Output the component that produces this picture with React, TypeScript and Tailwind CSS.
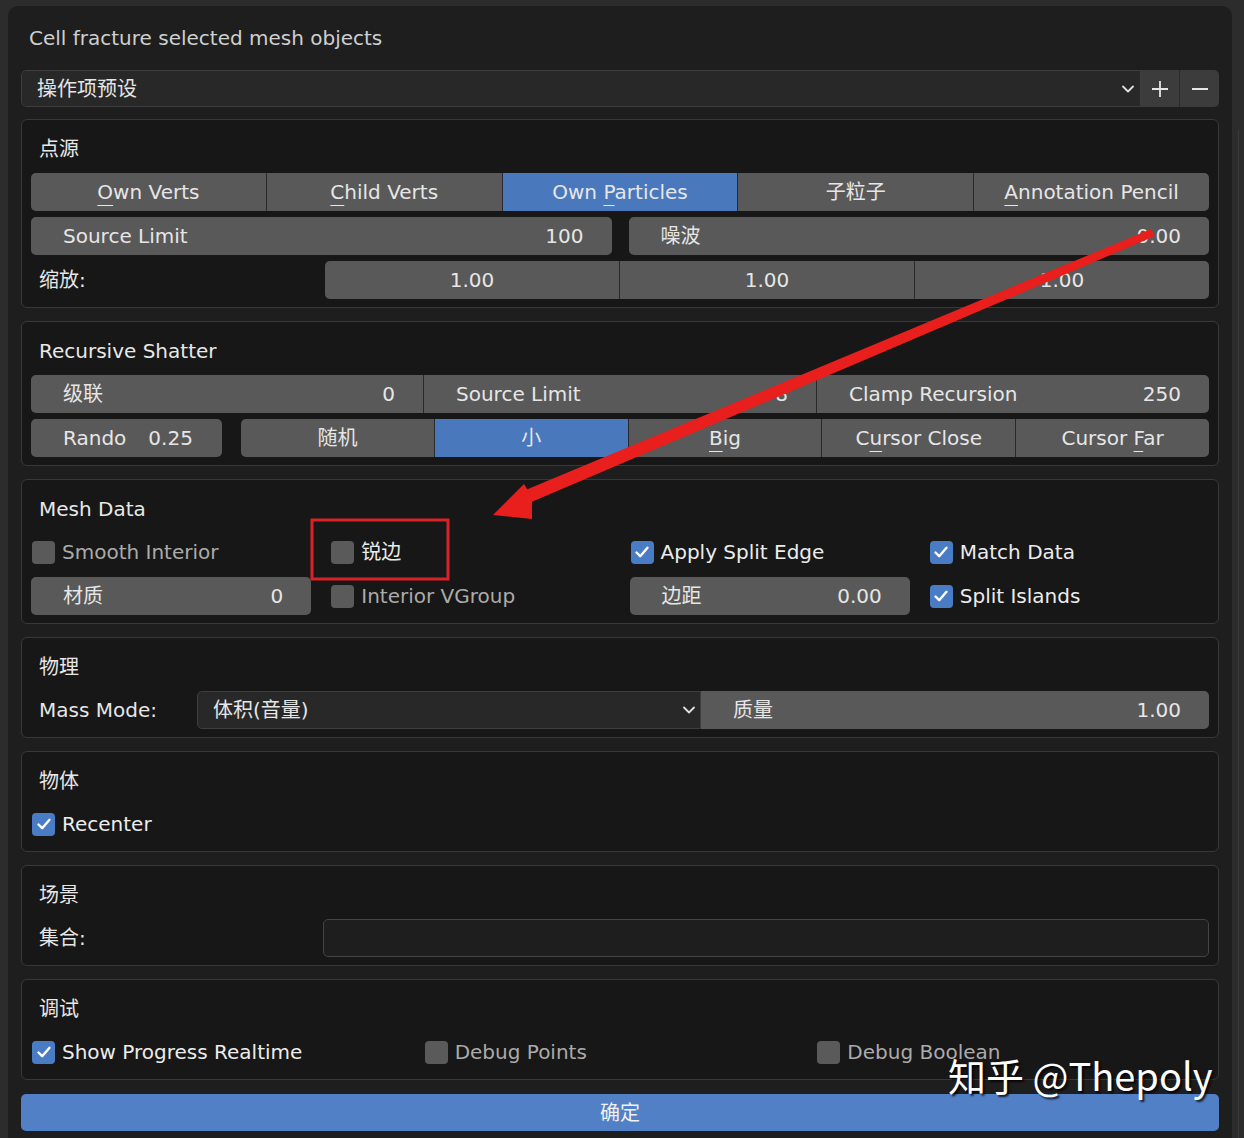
import React from "react";

const BTN = "bg-[#595959]";
const BLUE = "bg-[#4a78bd]";

function U({ children }: { children: React.ReactNode }) {
  return <span className="underline decoration-1 underline-offset-[6px]">{children}</span>;
}

function Seg({ items, active, cols }: { items: React.ReactNode[]; active: number; cols?: string }) {
  return (
    <div className={`flex h-[38px] rounded-[5px] overflow-hidden gap-px bg-[#2a2a2a] ${cols ?? ""}`}>
      {items.map((it, i) => (
        <div
          key={i}
          className={`flex-1 flex items-center justify-center text-[#e6e6e6] ${i === active ? BLUE : BTN}`}
        >
          {it}
        </div>
      ))}
    </div>
  );
}

function Num({ label, value, className }: { label: string; value: string; className?: string }) {
  return (
    <div className={`flex items-center justify-between h-[38px] pl-[32px] pr-[28px] ${BTN} text-[#e6e6e6] ${className ?? ""}`}>
      <span>{label}</span>
      <span>{value}</span>
    </div>
  );
}

function Check({ label, checked, dim }: { label: string; checked?: boolean; dim?: boolean }) {
  return (
    <div className="flex items-center h-[38px] pl-px gap-[7px]">
      <div
        className={`w-[23px] h-[23px] rounded-[4px] flex items-center justify-center ${checked ? "bg-[#4a7cc6]" : "bg-[#5a5a5a]"}`}
      >
        {checked && (
          <svg width="16" height="16" viewBox="0 0 16 16">
            <path d="M2.5 8.5 L6.2 12.2 L13.5 3.8" fill="none" stroke="#ffffff" strokeWidth="2.4" strokeLinecap="round" strokeLinejoin="round" />
          </svg>
        )}
      </div>
      <span className={dim ? "text-[#ababab]" : "text-[#ececec]"}>{label}</span>
    </div>
  );
}

function Panel({ title, children }: { title: string; children: React.ReactNode }) {
  return (
    <div className="rounded-[6px] border border-[#383838] bg-[#171717] px-[9px] pb-[8px]">
      <div className="h-[53px] pt-[4px] flex items-center pl-[8px] text-[#e8e8e8]">{title}</div>
      <div className="flex flex-col gap-[6px]">{children}</div>
    </div>
  );
}

function Chevron() {
  return (
    <svg width="14" height="10" viewBox="0 0 14 10">
      <path d="M2 2.5 L7 7.5 L12 2.5" fill="none" stroke="#e0e0e0" strokeWidth="1.8" strokeLinecap="round" strokeLinejoin="round" />
    </svg>
  );
}

export default function App() {
  return (
    <div className="relative w-[1244px] h-[1138px] overflow-hidden bg-[#2c2c2c] font-['DejaVu_Sans','Noto_Sans_CJK_SC',sans-serif] text-[20px] leading-none">
      <div className="absolute left-[1238px] top-[130px] w-px h-[1008px] bg-[#3a3a3a]" />
      <div className="ml-[8px] mt-[6px] w-[1224px] h-[1140px] rounded-t-[10px] bg-[#1e1e1e] px-[13px]">
        <div className="h-[64px] flex items-center pl-[8px] text-[#cfcfcf]">Cell fracture selected mesh objects</div>
        <div className="flex h-[37px] rounded-[5px] overflow-hidden">
          <div className="flex-1 flex items-center justify-between bg-[#282828] border border-[#3e3e3e] rounded-l-[5px] pl-[15px] pr-[5px] text-[#e6e6e6]">
            <span>操作项预设</span>
            <Chevron />
          </div>
          <div className="w-[39px] bg-[#3c3c3c] flex items-center justify-center border-r border-[#2a2a2a]">
            <svg width="20" height="20" viewBox="0 0 20 20">
              <path d="M10 2 V18 M2 10 H18" stroke="#e6e6e6" strokeWidth="1.8" />
            </svg>
          </div>
          <div className="w-[39px] bg-[#3c3c3c] flex items-center justify-center">
            <svg width="20" height="20" viewBox="0 0 20 20">
              <path d="M2 10 H18" stroke="#e6e6e6" strokeWidth="1.8" />
            </svg>
          </div>
        </div>

        <div className="mt-[12px] flex flex-col gap-[13px]">
          <Panel title="点源">
            <Seg
              active={2}
              items={[
                <span><U>O</U>wn Verts</span>,
                <span><U>C</U>hild Verts</span>,
                <span>Own <U>P</U>articles</span>,
                <span>子粒子</span>,
                <span><U>A</U>nnotation Pencil</span>,
              ]}
            />
            <div className="grid grid-cols-2 gap-[17px]">
              <Num label="Source Limit" value="100" className="rounded-[5px]" />
              <Num label="噪波" value="0.00" className="rounded-[5px]" />
            </div>
            <div className="flex h-[38px]">
              <div className="w-[294px] flex items-center pl-[8px] text-[#e6e6e6]">缩放:</div>
              <Seg active={-1} cols="flex-1" items={["1.00", "1.00", "1.00"]} />
            </div>
          </Panel>

          <Panel title="Recursive Shatter">
            <div className="flex h-[38px] rounded-[5px] overflow-hidden gap-px bg-[#2a2a2a]">
              <Num label="级联" value="0" className="flex-1" />
              <Num label="Source Limit" value="8" className="flex-1" />
              <Num label="Clamp Recursion" value="250" className="flex-1" />
            </div>
            <div className="flex gap-[19px]">
              <div className={`w-[191px] h-[38px] rounded-[5px] flex items-center pl-[32px] gap-[22px] ${BTN} text-[#e6e6e6]`}>
                <span>Rando</span>
                <span>0.25</span>
              </div>
              <Seg
                active={1}
                cols="flex-1"
                items={[
                  <span>随机</span>,
                  <span>小</span>,
                  <span><U>B</U>ig</span>,
                  <span>C<U>u</U>rsor Close</span>,
                  <span>Cursor <U>F</U>ar</span>,
                ]}
              />
            </div>
          </Panel>

          <Panel title="Mesh Data">
            <div className="grid grid-cols-4 gap-x-[19px] gap-y-[6px]">
              <Check label="Smooth Interior" dim />
              <Check label="锐边" />
              <Check label="Apply Split Edge" checked />
              <Check label="Match Data" checked />
              <Num label="材质" value="0" className="rounded-[5px]" />
              <Check label="Interior VGroup" dim />
              <Num label="边距" value="0.00" className="rounded-[5px]" />
              <Check label="Split Islands" checked />
            </div>
          </Panel>

          <Panel title="物理">
            <div className="flex h-[38px]">
              <div className="w-[166px] flex items-center pl-[8px] text-[#e6e6e6]">Mass Mode:</div>
              <div className="w-[504px] flex items-center justify-between rounded-l-[5px] bg-[#282828] border border-[#3e3e3e] pl-[15px] pr-[4px] text-[#e6e6e6]">
                <span>体积(音量)</span>
                <Chevron />
              </div>
              <Num label="质量" value="1.00" className="flex-1 rounded-r-[5px]" />
            </div>
          </Panel>

          <Panel title="物体">
            <Check label="Recenter" checked />
          </Panel>

          <Panel title="场景">
            <div className="flex h-[38px]">
              <div className="w-[292px] flex items-center pl-[8px] text-[#e6e6e6]">集合:</div>
              <div className="flex-1 rounded-[5px] bg-[#1e1e1e] border border-[#444444]" />
            </div>
          </Panel>

          <Panel title="调试">
            <div className="grid grid-cols-3">
              <Check label="Show Progress Realtime" checked />
              <Check label="Debug Points" dim />
              <Check label="Debug Boolean" dim />
            </div>
          </Panel>
        </div>

        <div className="mt-[14px] h-[37px] rounded-[5px] bg-[#5280c6] flex items-center justify-center text-[#f0f0f0]">确定</div>
      </div>

      <div className="absolute left-[948px] top-[1056px] text-[38px] text-white font-['Noto_Sans_CJK_SC',sans-serif] [text-shadow:2px_2px_2px_rgba(0,0,0,0.8)]">
        知乎 @Thepoly
      </div>

      <svg className="absolute left-0 top-0 pointer-events-none" width="1244" height="1138" viewBox="0 0 1244 1138">
        <polygon points="1151,229 1155,236 522,506 516,494" fill="#e81f1c" />
        <polygon points="493,515 524,484 532,497 532,519" fill="#e81f1c" />
        <rect x="312" y="520" width="136" height="59" fill="none" stroke="#d92228" strokeWidth="3" />
      </svg>
    </div>
  );
}
